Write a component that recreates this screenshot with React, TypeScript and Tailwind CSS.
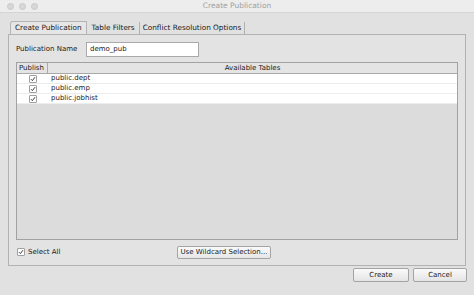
import React from "react";

const font = { fontFamily: '"DejaVu Sans", "Liberation Sans", sans-serif' };

function Check({ className = "" }: { className?: string }) {
  return (
    <div className={"w-[8px] h-[8px] bg-white border border-[#a0a0a0] rounded-[1px] flex items-center justify-center " + className}>
      <svg width="6" height="6" viewBox="0 0 6 6">
        <path d="M1 3.2 L2.4 4.6 L5 1.2" fill="none" stroke="#3a3a3a" strokeWidth="1" />
      </svg>
    </div>
  );
}

export default function App() {
  const rows = ["public.dept", "public.emp", "public.jobhist"];
  return (
    <div className="w-[474px] h-[295px] bg-[#e1e1e1] overflow-hidden flex flex-col text-[7px] text-[#1a1a1a]" style={font}>
      {/* title bar */}
      <div className="h-[13px] bg-[#ededed] border-b border-[#d4d4d4] flex items-center relative">
        <div className="flex gap-[5px] ml-[7px]">
          <div className="w-[7px] h-[7px] rounded-full bg-[#d8d8d8] border border-[#c8c8c8]" />
          <div className="w-[7px] h-[7px] rounded-full bg-[#d8d8d8] border border-[#c8c8c8]" />
          <div className="w-[7px] h-[7px] rounded-full bg-[#d8d8d8] border border-[#c8c8c8]" />
        </div>
        <div className="absolute left-0 right-0 text-center text-[7.5px] text-[#a0a0a0]">Create Publication</div>
      </div>

      {/* tabs */}
      <div className="flex items-end h-[21px] pl-[10px] text-[7.3px]">
        <div className="h-[13px] px-[4px] flex items-center bg-[#e6e6e6] border-t border-l border-r border-[#b4b4b4] rounded-tl-[3px]">Create Publication</div>
        <div className="h-[12px] px-[4px] ml-[1px] flex items-center border-r border-[#b0b0b0]">Table Filters</div>
        <div className="h-[12px] px-[3px] flex items-center border-r border-[#b0b0b0]">Conflict Resolution Options</div>
      </div>

      {/* panel */}
      <div className="ml-[8px] w-[458px] h-[232px] border border-[#b2b2b2] bg-[#e3e3e3] flex flex-col px-[7px]">
        <div className="flex items-center mt-[7px] h-[15px]">
          <span className="w-[70px]">Publication Name</span>
          <div className="w-[113px] h-[15px] bg-white border border-[#a9a9a9] flex items-center px-[3px]">demo_pub</div>
        </div>

        {/* table */}
        <div className="mt-[5px] w-[442px] h-[178px] border border-[#a2a2a2] bg-[#dcdcdc] flex flex-col">
          <div className="flex h-[11px] border-b border-[#a9a9a9] bg-[#e4e4e4]">
            <div className="w-[31px] border-r border-[#a9a9a9] flex items-center pl-[2px]">Publish</div>
            <div className="flex-1 flex items-center justify-center">Available Tables</div>
          </div>
          {rows.map((r) => (
            <div key={r} className="flex h-[10px] bg-white border-b border-[#ededed] items-center">
              <div className="w-[31px] flex justify-center">
                <Check />
              </div>
              <div className="pl-[3px]">{r}</div>
            </div>
          ))}
        </div>

        <div className="flex items-center mt-[5px] h-[14px]">
          <Check className="ml-[1px]" />
          <span className="ml-[3px]">Select All</span>
          <div className="ml-[116px] h-[13px] px-[3px] flex items-center bg-gradient-to-b from-[#fafafa] to-[#e6e6e6] border border-[#a4a4a4] rounded-[2px]">Use Wildcard Selection...</div>
        </div>
      </div>

      {/* buttons */}
      <div className="flex justify-end gap-[4px] mt-[2px] pr-[7px]">
        <div className="w-[56px] h-[14px] flex items-center justify-center bg-gradient-to-b from-[#fafafa] to-[#e4e4e4] border border-[#a4a4a4] rounded-[2px]">Create</div>
        <div className="w-[54px] h-[14px] flex items-center justify-center bg-gradient-to-b from-[#fafafa] to-[#e4e4e4] border border-[#a4a4a4] rounded-[2px]">Cancel</div>
      </div>
    </div>
  );
}
